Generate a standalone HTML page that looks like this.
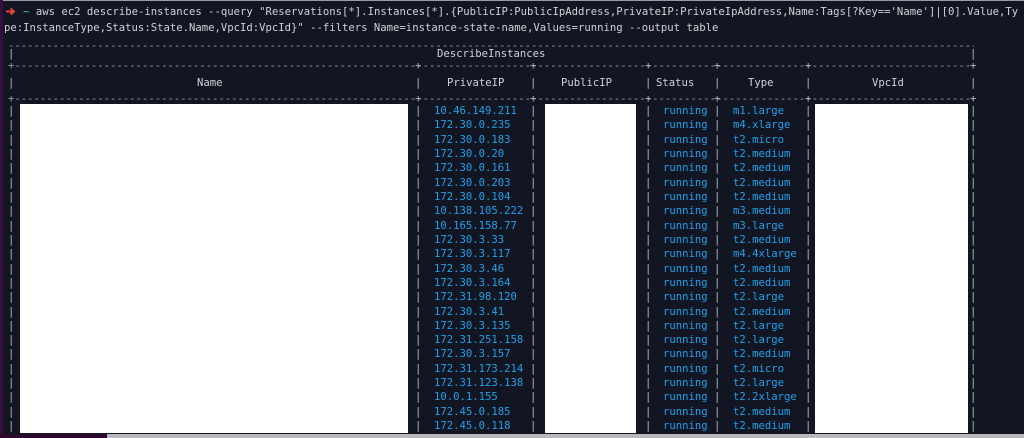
<!DOCTYPE html>
<html><head><meta charset="utf-8"><style>
html,body{margin:0;padding:0;}
body{width:1024px;height:438px;overflow:hidden;background:#121622;position:relative;font-family:"DejaVu Sans Mono","Liberation Mono",monospace;font-size:10.6px;color:#d0d2d6;}
.a{position:absolute;white-space:pre;line-height:14px;}
.d{position:absolute;left:8px;width:966px;overflow:hidden;white-space:pre;line-height:14px;color:#9a9ca3;}
.r{position:absolute;left:0;width:1024px;height:14px;}
.r span{position:absolute;top:0;white-space:pre;line-height:14px;}
.p{color:#b4b6bb;}
.b{color:#1ea0ea;}
.w{position:absolute;background:#fff;}
</style></head><body>
<div style="position:absolute;left:0;top:0;width:1024px;height:1px;background:#9a9aa0"></div>
<div style="position:absolute;left:0;top:0;width:3px;height:438px;background:#3a0e3c"></div>
<svg style="position:absolute;left:6px;top:7px" width="10" height="9" viewBox="0 0 10 9"><path d="M0 4.5H7M4.5 1.5L8 4.5L4.5 7.5" stroke="#e0443a" stroke-width="2" fill="none"/></svg>
<div class="a" style="left:4px;top:5px">   <span style="color:#3cc4b8">~</span> aws ec2 describe-instances --query "Reservations[*].Instances[*].{PublicIP:PublicIpAddress,PrivateIP:PrivateIpAddress,Name:Tags[?Key=='Name']|[0].Value,Ty</div>
<div class="a" style="left:4px;top:21px">pe:InstanceType,Status:State.Name,VpcId:VpcId}" --filters Name=instance-state-name,Values=running --output table</div>
<div class="d" style="top:39px">------------------------------------------------------------------------------------------------------------------------------------------------------------------------------------------</div>
<div class="a p" style="left:8px;top:47px">|</div><div class="a p" style="left:970px;top:47px">|</div>
<div class="a" style="left:437px;top:47px">DescribeInstances</div>
<div class="d" style="top:59px">+-------------------------------------------------------------------------------------------------------------------------------------------------------------------------------------------</div>
<div class="a p" style="left:970px;top:59px">+</div><div class="a p" style="left:415px;top:59px">+</div><div class="a p" style="left:530px;top:59px">+</div><div class="a p" style="left:645px;top:59px">+</div><div class="a p" style="left:714px;top:59px">+</div><div class="a p" style="left:805px;top:59px">+</div>
<div class="r" style="top:76px"><span class="p" style="left:8px">|</span><span style="left:197px">Name</span><span class="p" style="left:415px">|</span><span style="left:447px">PrivateIP</span><span class="p" style="left:530px">|</span><span style="left:561px">PublicIP</span><span class="p" style="left:645px">|</span><span style="left:656px">Status</span><span class="p" style="left:714px">|</span><span style="left:748px">Type</span><span class="p" style="left:805px">|</span><span style="left:872px">VpcId</span><span class="p" style="left:970px">|</span></div>
<div class="d" style="top:92px">+-------------------------------------------------------------------------------------------------------------------------------------------------------------------------------------------</div>
<div class="a p" style="left:970px;top:92px">+</div><div class="a p" style="left:415px;top:92px">+</div><div class="a p" style="left:530px;top:92px">+</div><div class="a p" style="left:645px;top:92px">+</div><div class="a p" style="left:714px;top:92px">+</div><div class="a p" style="left:805px;top:92px">+</div>

<div class="r" style="top:104px"><span class="p" style="left:8px">|</span><span class="p" style="left:415px">|</span><span class="b" style="left:434px">10.46.149.211</span><span class="p" style="left:530px">|</span><span class="p" style="left:645px">|</span><span class="b" style="left:663px">running</span><span class="p" style="left:714px">|</span><span class="b" style="left:733px">m1.large</span><span class="p" style="left:805px">|</span><span class="p" style="left:970px">|</span></div>
<div class="r" style="top:118.3px"><span class="p" style="left:8px">|</span><span class="p" style="left:415px">|</span><span class="b" style="left:434px">172.30.0.235</span><span class="p" style="left:530px">|</span><span class="p" style="left:645px">|</span><span class="b" style="left:663px">running</span><span class="p" style="left:714px">|</span><span class="b" style="left:733px">m4.xlarge</span><span class="p" style="left:805px">|</span><span class="p" style="left:970px">|</span></div>
<div class="r" style="top:132.6px"><span class="p" style="left:8px">|</span><span class="p" style="left:415px">|</span><span class="b" style="left:434px">172.30.0.183</span><span class="p" style="left:530px">|</span><span class="p" style="left:645px">|</span><span class="b" style="left:663px">running</span><span class="p" style="left:714px">|</span><span class="b" style="left:733px">t2.micro</span><span class="p" style="left:805px">|</span><span class="p" style="left:970px">|</span></div>
<div class="r" style="top:147px"><span class="p" style="left:8px">|</span><span class="p" style="left:415px">|</span><span class="b" style="left:434px">172.30.0.20</span><span class="p" style="left:530px">|</span><span class="p" style="left:645px">|</span><span class="b" style="left:663px">running</span><span class="p" style="left:714px">|</span><span class="b" style="left:733px">t2.medium</span><span class="p" style="left:805px">|</span><span class="p" style="left:970px">|</span></div>
<div class="r" style="top:161.3px"><span class="p" style="left:8px">|</span><span class="p" style="left:415px">|</span><span class="b" style="left:434px">172.30.0.161</span><span class="p" style="left:530px">|</span><span class="p" style="left:645px">|</span><span class="b" style="left:663px">running</span><span class="p" style="left:714px">|</span><span class="b" style="left:733px">t2.medium</span><span class="p" style="left:805px">|</span><span class="p" style="left:970px">|</span></div>
<div class="r" style="top:175.6px"><span class="p" style="left:8px">|</span><span class="p" style="left:415px">|</span><span class="b" style="left:434px">172.30.0.203</span><span class="p" style="left:530px">|</span><span class="p" style="left:645px">|</span><span class="b" style="left:663px">running</span><span class="p" style="left:714px">|</span><span class="b" style="left:733px">t2.medium</span><span class="p" style="left:805px">|</span><span class="p" style="left:970px">|</span></div>
<div class="r" style="top:189.9px"><span class="p" style="left:8px">|</span><span class="p" style="left:415px">|</span><span class="b" style="left:434px">172.30.0.104</span><span class="p" style="left:530px">|</span><span class="p" style="left:645px">|</span><span class="b" style="left:663px">running</span><span class="p" style="left:714px">|</span><span class="b" style="left:733px">t2.medium</span><span class="p" style="left:805px">|</span><span class="p" style="left:970px">|</span></div>
<div class="r" style="top:204.2px"><span class="p" style="left:8px">|</span><span class="p" style="left:415px">|</span><span class="b" style="left:434px">10.138.105.222</span><span class="p" style="left:530px">|</span><span class="p" style="left:645px">|</span><span class="b" style="left:663px">running</span><span class="p" style="left:714px">|</span><span class="b" style="left:733px">m3.medium</span><span class="p" style="left:805px">|</span><span class="p" style="left:970px">|</span></div>
<div class="r" style="top:218.6px"><span class="p" style="left:8px">|</span><span class="p" style="left:415px">|</span><span class="b" style="left:434px">10.165.158.77</span><span class="p" style="left:530px">|</span><span class="p" style="left:645px">|</span><span class="b" style="left:663px">running</span><span class="p" style="left:714px">|</span><span class="b" style="left:733px">m3.large</span><span class="p" style="left:805px">|</span><span class="p" style="left:970px">|</span></div>
<div class="r" style="top:232.9px"><span class="p" style="left:8px">|</span><span class="p" style="left:415px">|</span><span class="b" style="left:434px">172.30.3.33</span><span class="p" style="left:530px">|</span><span class="p" style="left:645px">|</span><span class="b" style="left:663px">running</span><span class="p" style="left:714px">|</span><span class="b" style="left:733px">t2.medium</span><span class="p" style="left:805px">|</span><span class="p" style="left:970px">|</span></div>
<div class="r" style="top:247.2px"><span class="p" style="left:8px">|</span><span class="p" style="left:415px">|</span><span class="b" style="left:434px">172.30.3.117</span><span class="p" style="left:530px">|</span><span class="p" style="left:645px">|</span><span class="b" style="left:663px">running</span><span class="p" style="left:714px">|</span><span class="b" style="left:733px">m4.4xlarge</span><span class="p" style="left:805px">|</span><span class="p" style="left:970px">|</span></div>
<div class="r" style="top:261.5px"><span class="p" style="left:8px">|</span><span class="p" style="left:415px">|</span><span class="b" style="left:434px">172.30.3.46</span><span class="p" style="left:530px">|</span><span class="p" style="left:645px">|</span><span class="b" style="left:663px">running</span><span class="p" style="left:714px">|</span><span class="b" style="left:733px">t2.medium</span><span class="p" style="left:805px">|</span><span class="p" style="left:970px">|</span></div>
<div class="r" style="top:275.8px"><span class="p" style="left:8px">|</span><span class="p" style="left:415px">|</span><span class="b" style="left:434px">172.30.3.164</span><span class="p" style="left:530px">|</span><span class="p" style="left:645px">|</span><span class="b" style="left:663px">running</span><span class="p" style="left:714px">|</span><span class="b" style="left:733px">t2.medium</span><span class="p" style="left:805px">|</span><span class="p" style="left:970px">|</span></div>
<div class="r" style="top:290.2px"><span class="p" style="left:8px">|</span><span class="p" style="left:415px">|</span><span class="b" style="left:434px">172.31.98.120</span><span class="p" style="left:530px">|</span><span class="p" style="left:645px">|</span><span class="b" style="left:663px">running</span><span class="p" style="left:714px">|</span><span class="b" style="left:733px">t2.large</span><span class="p" style="left:805px">|</span><span class="p" style="left:970px">|</span></div>
<div class="r" style="top:304.5px"><span class="p" style="left:8px">|</span><span class="p" style="left:415px">|</span><span class="b" style="left:434px">172.30.3.41</span><span class="p" style="left:530px">|</span><span class="p" style="left:645px">|</span><span class="b" style="left:663px">running</span><span class="p" style="left:714px">|</span><span class="b" style="left:733px">t2.medium</span><span class="p" style="left:805px">|</span><span class="p" style="left:970px">|</span></div>
<div class="r" style="top:318.8px"><span class="p" style="left:8px">|</span><span class="p" style="left:415px">|</span><span class="b" style="left:434px">172.30.3.135</span><span class="p" style="left:530px">|</span><span class="p" style="left:645px">|</span><span class="b" style="left:663px">running</span><span class="p" style="left:714px">|</span><span class="b" style="left:733px">t2.large</span><span class="p" style="left:805px">|</span><span class="p" style="left:970px">|</span></div>
<div class="r" style="top:333.1px"><span class="p" style="left:8px">|</span><span class="p" style="left:415px">|</span><span class="b" style="left:434px">172.31.251.158</span><span class="p" style="left:530px">|</span><span class="p" style="left:645px">|</span><span class="b" style="left:663px">running</span><span class="p" style="left:714px">|</span><span class="b" style="left:733px">t2.large</span><span class="p" style="left:805px">|</span><span class="p" style="left:970px">|</span></div>
<div class="r" style="top:347.4px"><span class="p" style="left:8px">|</span><span class="p" style="left:415px">|</span><span class="b" style="left:434px">172.30.3.157</span><span class="p" style="left:530px">|</span><span class="p" style="left:645px">|</span><span class="b" style="left:663px">running</span><span class="p" style="left:714px">|</span><span class="b" style="left:733px">t2.medium</span><span class="p" style="left:805px">|</span><span class="p" style="left:970px">|</span></div>
<div class="r" style="top:361.8px"><span class="p" style="left:8px">|</span><span class="p" style="left:415px">|</span><span class="b" style="left:434px">172.31.173.214</span><span class="p" style="left:530px">|</span><span class="p" style="left:645px">|</span><span class="b" style="left:663px">running</span><span class="p" style="left:714px">|</span><span class="b" style="left:733px">t2.micro</span><span class="p" style="left:805px">|</span><span class="p" style="left:970px">|</span></div>
<div class="r" style="top:376.1px"><span class="p" style="left:8px">|</span><span class="p" style="left:415px">|</span><span class="b" style="left:434px">172.31.123.138</span><span class="p" style="left:530px">|</span><span class="p" style="left:645px">|</span><span class="b" style="left:663px">running</span><span class="p" style="left:714px">|</span><span class="b" style="left:733px">t2.large</span><span class="p" style="left:805px">|</span><span class="p" style="left:970px">|</span></div>
<div class="r" style="top:390.4px"><span class="p" style="left:8px">|</span><span class="p" style="left:415px">|</span><span class="b" style="left:434px">10.0.1.155</span><span class="p" style="left:530px">|</span><span class="p" style="left:645px">|</span><span class="b" style="left:663px">running</span><span class="p" style="left:714px">|</span><span class="b" style="left:733px">t2.2xlarge</span><span class="p" style="left:805px">|</span><span class="p" style="left:970px">|</span></div>
<div class="r" style="top:404.7px"><span class="p" style="left:8px">|</span><span class="p" style="left:415px">|</span><span class="b" style="left:434px">172.45.0.185</span><span class="p" style="left:530px">|</span><span class="p" style="left:645px">|</span><span class="b" style="left:663px">running</span><span class="p" style="left:714px">|</span><span class="b" style="left:733px">t2.medium</span><span class="p" style="left:805px">|</span><span class="p" style="left:970px">|</span></div>
<div class="r" style="top:419px"><span class="p" style="left:8px">|</span><span class="p" style="left:415px">|</span><span class="b" style="left:434px">172.45.0.118</span><span class="p" style="left:530px">|</span><span class="p" style="left:645px">|</span><span class="b" style="left:663px">running</span><span class="p" style="left:714px">|</span><span class="b" style="left:733px">t2.medium</span><span class="p" style="left:805px">|</span><span class="p" style="left:970px">|</span></div>

<div class="w" style="left:20px;top:104px;width:388px;height:329px"></div>
<div class="w" style="left:545px;top:104px;width:91px;height:329px"></div>
<div class="w" style="left:815px;top:104px;width:153px;height:329px"></div>
<div style="position:absolute;left:0;top:434px;width:107px;height:4px;background:#2c0a30"></div>
<div style="position:absolute;left:107px;top:434px;width:917px;height:4px;background:#b8b8bc"></div>
</body></html>
